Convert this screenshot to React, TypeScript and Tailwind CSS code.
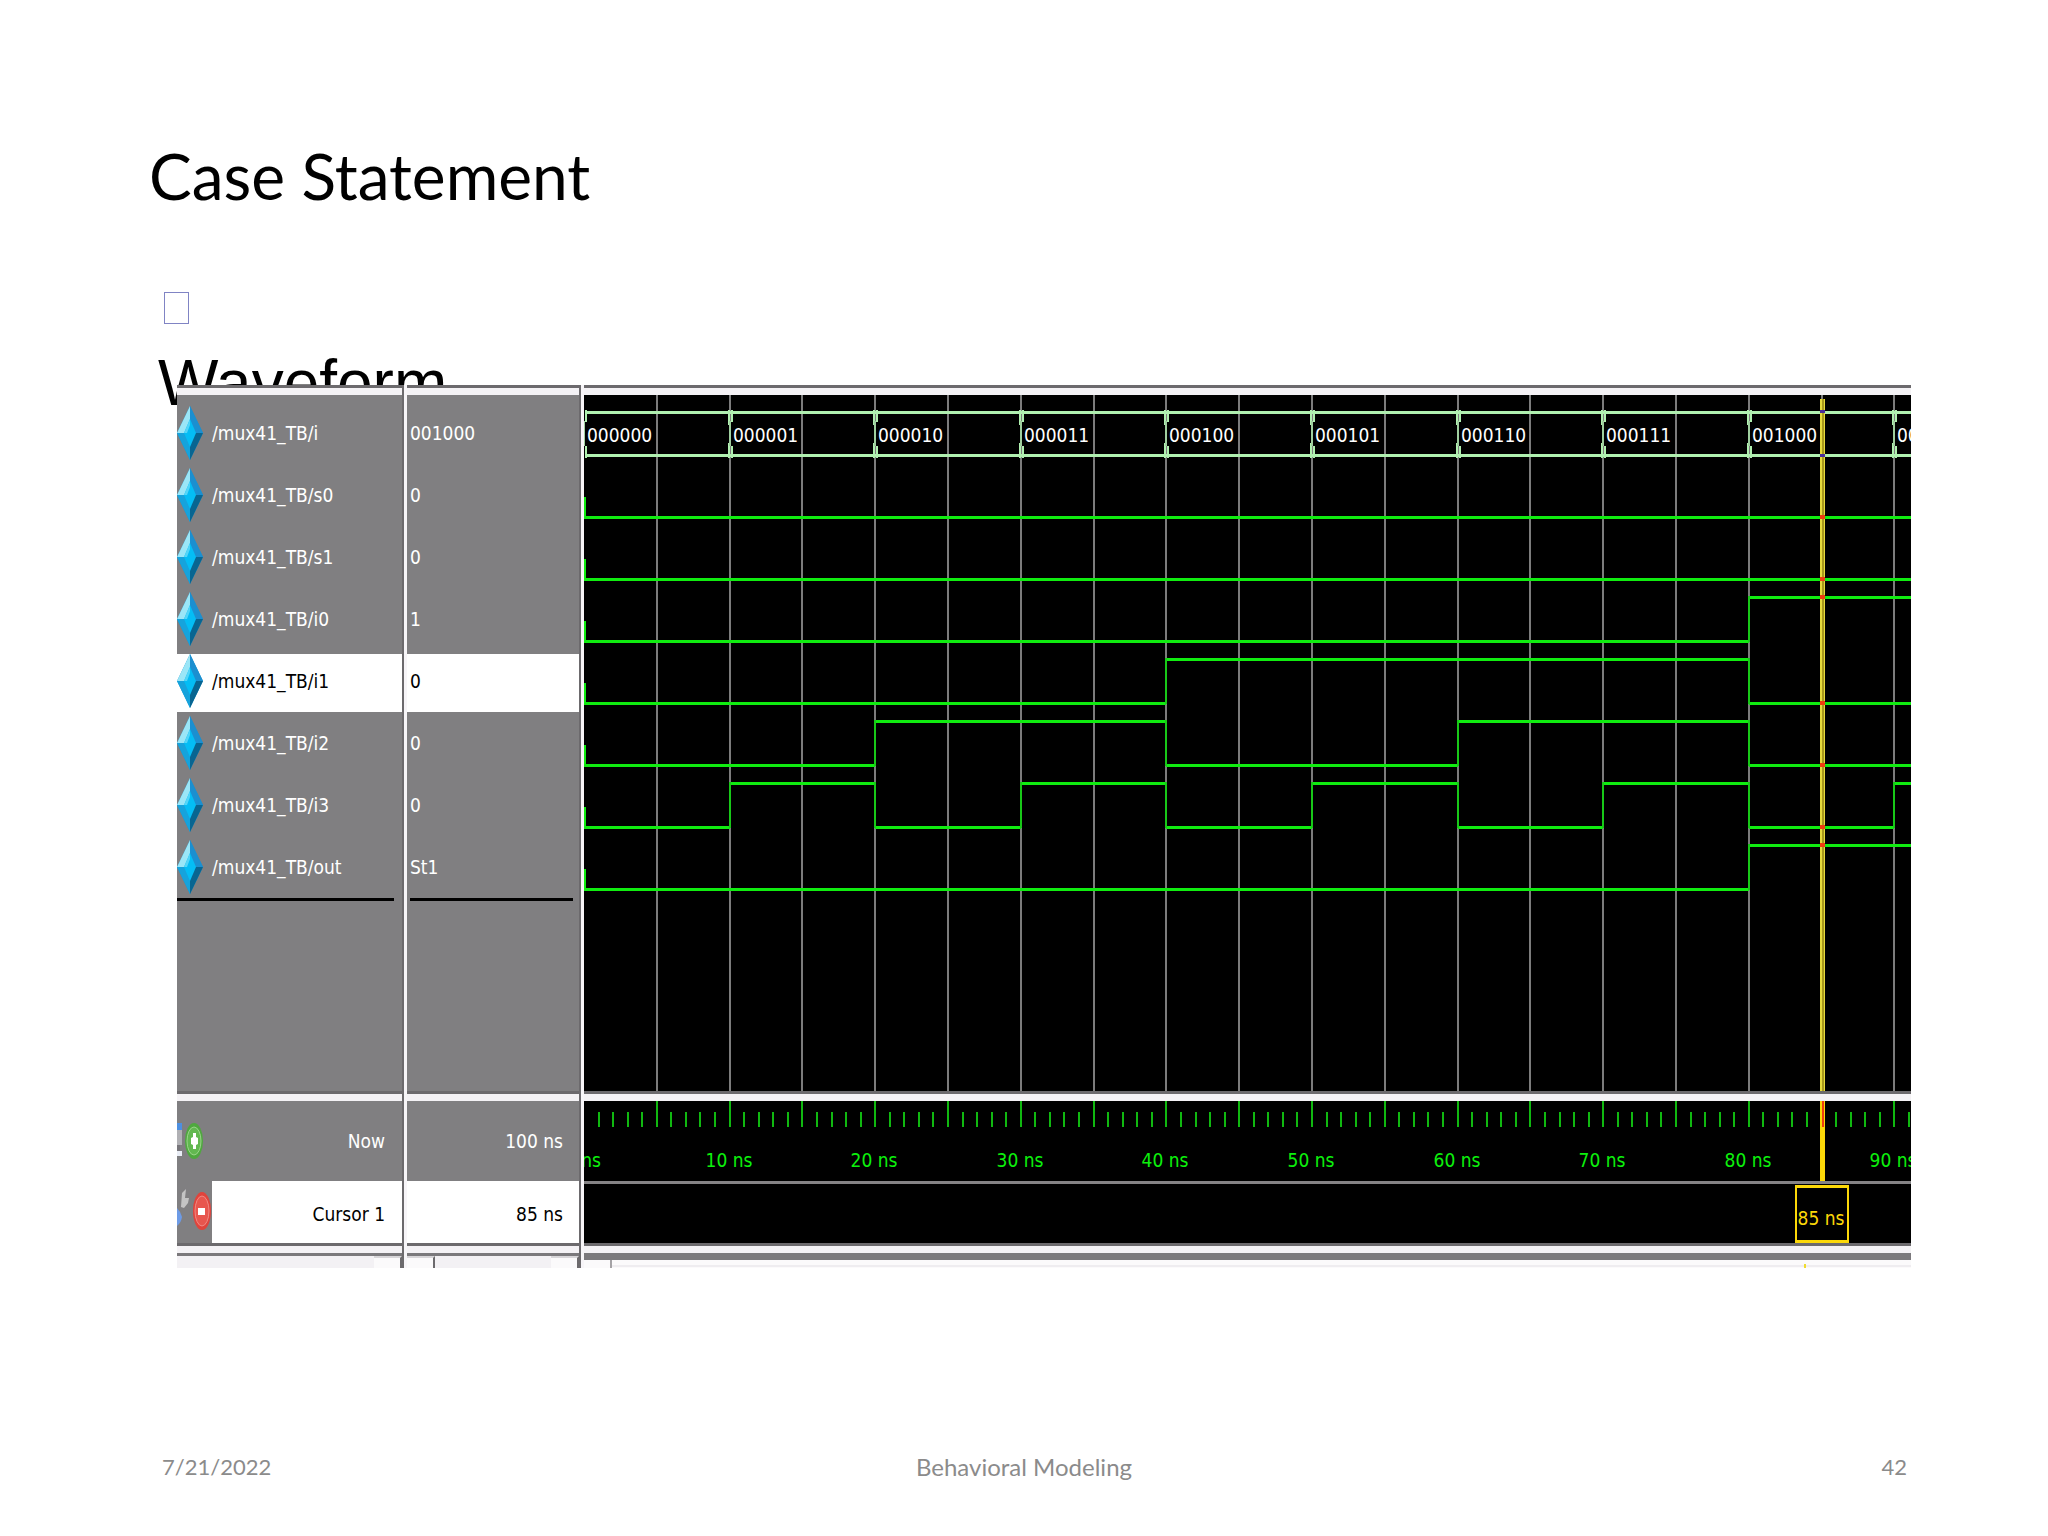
import { ReactNode } from "react";
import clsx from "clsx";

type Signal = {
  name: string;
  value: string;
  // [start, end] pairs in ns where the trace is high, null for the bus
  high: [number, number][] | null;
  selected?: boolean;
};

const END = 100;

const signals: Signal[] = [
  { name: "/mux41_TB/i", value: "001000", high: null },
  { name: "/mux41_TB/s0", value: "0", high: [] },
  { name: "/mux41_TB/s1", value: "0", high: [] },
  { name: "/mux41_TB/i0", value: "1", high: [[80, END]] },
  { name: "/mux41_TB/i1", value: "0", high: [[40, 80]], selected: true },
  { name: "/mux41_TB/i2", value: "0", high: [[20, 40], [60, 80]] },
  { name: "/mux41_TB/i3", value: "0", high: [[10, 20], [30, 40], [50, 60], [70, 80], [90, END]] },
  { name: "/mux41_TB/out", value: "St1", high: [[80, END]] },
];

const CURSOR = 85;
const ROW = 62;
const AMP = 44;

const xAt = (ns: number) => Math.round(ns * 14.56);
const lowAt = (row: number) => 60 + row * ROW;

const isHigh = (s: Signal, ns: number) => !!s.high?.some(([a, b]) => ns >= a && ns < b);

function Diamond() {
  return (
    <svg viewBox="0 0 26 54" className="w-[26px] h-[54px] shrink-0" aria-hidden="true">
      <path d="M13 0 L0 27 L13 54 L26 27 Z" fill="#1593cf" />
      <path d="M13 0 L0 27 L8 27 L13 15 Z" fill="#9be6f7" />
      <path d="M13 0 L13 15 L18 27 L26 27 Z" fill="#1b8fd0" />
      <path d="M0 27 L8 27 L13 39 L13 54 Z" fill="#16a3dc" />
      <path d="M26 27 L18 27 L13 39 L13 54 Z" fill="#086591" />
      <path d="M13 13 L7 27 L13 41 L19 27 Z" fill="#04bdf5" />
      <path d="M13 13 L7 27 L10 27 L13 19 Z" fill="#54d5f8" />
    </svg>
  );
}

function AddIcon() {
  return (
    <svg viewBox="0 0 35 80" className="w-[35px] h-[80px] shrink-0" aria-hidden="true">
      <rect x="0" y="22" width="5" height="7" fill="#4d8fe0" />
      <rect x="0" y="29" width="5" height="15" fill="#b0b0b4" />
      <rect x="0" y="44" width="3" height="7" fill="#77757a" />
      <rect x="0" y="50" width="5" height="5" fill="#e9edf5" />
      <ellipse cx="17" cy="40" rx="9" ry="18" fill="#4fa83f" />
      <ellipse cx="17" cy="40" rx="7" ry="14" fill="#62b850" stroke="#9ad48a" strokeWidth="1" />
      <path d="M16 32 h3 v4 l2 1 v6 l-2 1 v4 h-3 v-4 l-2 -1 v-6 l2 -1 Z" fill="#fff" />
    </svg>
  );
}

function RemoveIcon() {
  return (
    <svg viewBox="0 0 35 62" className="w-[35px] h-[62px] shrink-0" aria-hidden="true">
      <path d="M0 27 q4 4 5 9 q-1 6 -5 9 Z" fill="#6d9be6" />
      <path d="M4 26 L5 12 L9 8 L8 17 L12 17 L11 22 L7 27 Z" fill="#c4c4c4" />
      <ellipse cx="25" cy="30" rx="9" ry="19" fill="#e0443c" />
      <ellipse cx="25" cy="30" rx="7" ry="15" fill="#e8564e" stroke="#f08a84" strokeWidth="1" />
      <rect x="21" y="27" width="7" height="7" fill="#fff" />
    </svg>
  );
}

function Splitter() {
  return <div className="w-[5px] shrink-0 bg-[#f7f5f8] border-l-2 border-[#6c6a6d]" />;
}

function Bar() {
  return <div className="h-[10px] shrink-0 bg-[#f4f2f5] border-t-[3px] border-[#6c6a6d]" />;
}

function Scrollbar({ children }: { children?: ReactNode }) {
  return (
    <div className="flex h-[15px] justify-between border-t-[3px] border-[#7b797c] bg-[#f3f1f4]">{children}</div>
  );
}

function ScrollEnd() {
  return <div className="w-[28px] border-t-2 border-r-2 border-t-[#d8d6d9] border-r-[#6c6a6d] bg-[#fbfafb]" />;
}

function BusTrace() {
  const changes = [0, 10, 20, 30, 40, 50, 60, 70, 80, 90];
  return (
    <g stroke="#b0f0b0">
      <path d="M3 17 H1400 M3 60 H1400" strokeWidth="3" />
      {changes.map((t, i) => {
        const x = xAt(t);
        return (
          <g key={t}>
            <rect x={x - 2} y="15" width="1" height="14" />
            <rect x={x - 2} y="48" width="1" height="14" />
            <rect x={x + 1} y="15" width="1" height="11" />
            <rect x={x + 1} y="51" width="1" height="11" />
            <path d={`M${x} 26 V51`} stroke="#9fcf9f" strokeWidth="2" />
            <text x={x + 3} y="47" fill="#fff" stroke="none" fontSize="19">
              {i.toString(2).padStart(6, "0")}
            </text>
          </g>
        );
      })}
    </g>
  );
}

function Trace({ signal, row }: { signal: Signal; row: number }) {
  const low = lowAt(row);
  const edges = Array.from({ length: 10 }, (_, i) => i * 10);
  return (
    <g stroke="#10ec10">
      <path d={`M1 ${low - 20} V${low}`} strokeWidth="2" />
      {edges.map(t => {
        const y = isHigh(signal, t) ? low - AMP : low;
        const changed = t > 0 && isHigh(signal, t) !== isHigh(signal, t - 1);
        return (
          <g key={t}>
            <path d={`M${xAt(t)} ${y} H${xAt(t + 10)}`} strokeWidth="3" />
            {changed && <path d={`M${xAt(t)} ${low - AMP - 1} V${low + 1}`} stroke="#18c818" strokeWidth="2" />}
          </g>
        );
      })}
    </g>
  );
}

function WaveView() {
  const grid = Array.from({ length: 18 }, (_, i) => (i + 1) * 5);
  const cx = xAt(CURSOR);
  return (
    <svg className="block w-full h-[696px] bg-black" shapeRendering="crispEdges" role="img" aria-label="Waveforms">
      {grid.map(t => (
        <path key={t} d={`M${xAt(t)} 0 V696`} stroke="#7c7c7c" strokeWidth="2" />
      ))}
      <BusTrace />
      {signals.map((s, i) => s.high && <Trace key={s.name} signal={s} row={i} />)}
      <rect x={cx - 2} y="4" width="5" height="692" fill="#e6da3c" />
      <rect x={cx} y="4" width="2" height="692" fill="#a8981c" />
      <rect x={cx - 2} y="15" width="5" height="3" fill="#4a2c9c" />
      <rect x={cx - 2} y="59" width="5" height="3" fill="#4a2c9c" />
      {signals.map((s, i) =>
        s.high && (
          <rect
            key={s.name}
            x={cx - 2}
            y={(isHigh(s, CURSOR) ? lowAt(i) - AMP : lowAt(i)) - 2}
            width="5"
            height="4"
            fill="#f03c10"
          />
        )
      )}
    </svg>
  );
}

function Timeline() {
  const ticks = Array.from({ length: 100 }, (_, i) => i + 1);
  const cx = xAt(CURSOR);
  return (
    <svg className="block w-full h-[142px] bg-black" shapeRendering="crispEdges" role="img" aria-label="Timeline">
      {ticks.map(t => (
        <path key={t} d={`M${xAt(t)} ${t % 5 ? 11 : 0} V26`} stroke="#10b810" strokeWidth="2" />
      ))}
      {[0, 10, 20, 30, 40, 50, 60, 70, 80, 90].map(t => (
        <text key={t} x={xAt(t) - 1} y="66" textAnchor="middle" fill="#0cf00c" fontSize="19">
          {t} ns
        </text>
      ))}
      <rect x={cx - 2} y="0" width="5" height="80" fill="#fcd808" />
      <rect x={cx} y="0" width="2" height="26" fill="#f03c10" />
      <rect x="0" y="80" width="100%" height="3" fill="#858385" />
      <path d={`M${cx - 26} 84 V142 M${cx + 26} 84 V142`} stroke="#fcd808" strokeWidth="2" />
      <path d={`M${cx - 27} 85 H${cx + 27} M${cx - 27} 140 H${cx + 27}`} stroke="#fcd808" strokeWidth="3" />
      <text x={cx - 1} y="124" textAnchor="middle" fill="#fcd808" fontSize="19">
        {CURSOR} ns
      </text>
    </svg>
  );
}

function WaveWindow() {
  return (
    <section className="relative flex -mt-[31px] ml-[177px] mr-[137px] overflow-hidden font-['DejaVu_Sans_Condensed','DejaVu_Sans',sans-serif] text-[19px] leading-none text-white">
      <div className="w-[225px] shrink-0 bg-[#807f81]">
        <Bar />
        <ul className="h-[696px] pt-[11px] flex flex-col gap-1">
          {signals.map(s => (
            <li
              key={s.name}
              className={clsx("h-[58px] shrink-0 flex items-center gap-[9px] pb-1", s.selected && "bg-white text-black")}
            >
              <Diamond />
              {s.name}
            </li>
          ))}
          <li className="-mt-1 mr-2 h-[3px] bg-black" />
        </ul>
        <Bar />
        <div className="h-[80px] flex items-center justify-between pr-[17px]">
          <AddIcon />
          Now
        </div>
        <div className="h-[62px] flex text-black">
          <RemoveIcon />
          <div className="flex-1 flex items-center justify-end bg-white pr-[17px] pt-1">Cursor 1</div>
        </div>
        <Bar />
        <Scrollbar>
          <span />
          <ScrollEnd />
        </Scrollbar>
      </div>
      <Splitter />
      <div className="w-[172px] shrink-0 bg-[#807f81]">
        <Bar />
        <ul className="h-[696px] pt-[11px] flex flex-col gap-1">
          {signals.map(s => (
            <li
              key={s.name}
              className={clsx("h-[58px] shrink-0 flex items-center pl-[3px] pb-1", s.selected && "bg-white text-black")}
            >
              {s.value}
            </li>
          ))}
          <li className="-mt-1 ml-[3px] mr-[6px] h-[3px] bg-black" />
        </ul>
        <Bar />
        <div className="h-[80px] flex items-center justify-end pr-4">100 ns</div>
        <div className="h-[62px] flex items-center justify-end bg-white pr-4 pt-1 text-black">{CURSOR} ns</div>
        <Bar />
        <Scrollbar>
          <ScrollEnd />
          <ScrollEnd />
        </Scrollbar>
      </div>
      <Splitter />
      <div className="flex-1 min-w-0">
        <Bar />
        <WaveView />
        <Bar />
        <Timeline />
        <Bar />
        <div className="h-[15px] flex border-t-[7px] border-[#7b797c] bg-[#fbfafb]">
          <div className="w-[28px] border-r-2 border-[#a5a3a6]" />
          <svg className="flex-1 h-2" shapeRendering="crispEdges" aria-hidden="true">
            <rect x="0" y="5" width="100%" height="2" fill="#efedf0" />
            <rect x="1192" y="4" width="2" height="4" fill="#f0dc30" />
          </svg>
        </div>
      </div>
    </section>
  );
}

export default function App() {
  return (
    <main className="min-h-screen flex flex-col bg-white pt-[128px] pb-[52px] text-black">
      <h1 className="pl-[149px] font-[Lato,sans-serif] text-[64px] leading-[96px]">Case Statement</h1>
      <div className="pl-[158px] pt-[68px] font-['Liberation_Sans',sans-serif]">
        <div className="ml-1.5 w-[25px] h-[32px] border border-[#8084c4]" />
        <p className="pt-[26px] text-[64px] leading-[66px]">Waveform</p>
      </div>
      <WaveWindow />
      <footer className="mt-auto grid grid-cols-3 px-[141px] font-[Lato,sans-serif] text-[22px] leading-[34px] text-[#8b8b8b]">
        <span className="pl-[21px]">7/21/2022</span>
        <span className="text-center text-[24px]">Behavioral Modeling</span>
        <span className="text-right">42</span>
      </footer>
    </main>
  );
}
